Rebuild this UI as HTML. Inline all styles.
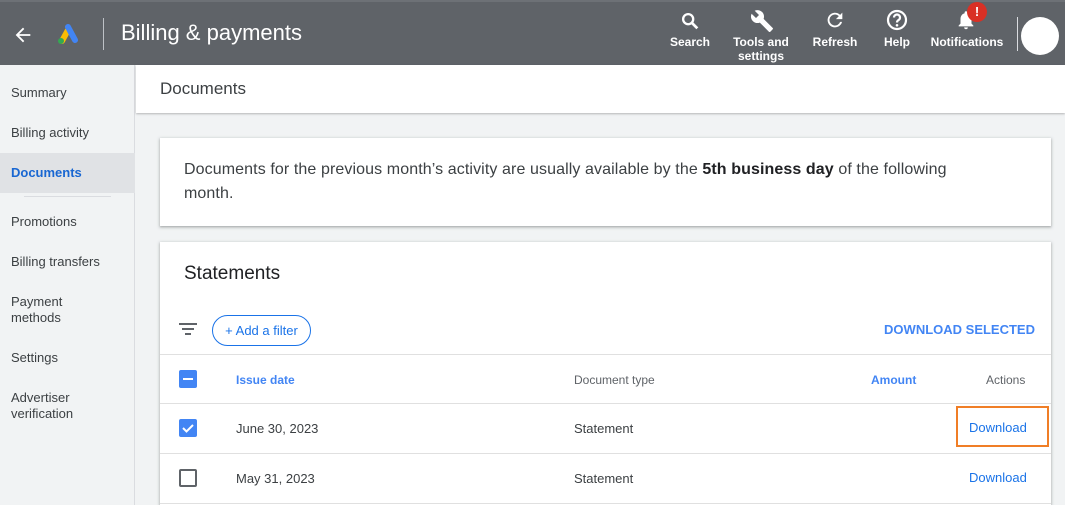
<!DOCTYPE html>
<html style="width:1065px;height:505px;overflow:hidden"><head><style>
*{box-sizing:border-box;margin:0;padding:0}
body{width:1065px;height:505px;overflow:hidden;font-family:"Liberation Sans",Arial,sans-serif;background:#f1f3f4;position:relative;color:#202124}
.hdr{position:absolute;left:0;top:0;width:1065px;height:65px;background:#5f6368;border-top:2px solid #6d7176}
.t{position:absolute;color:#fff}
.nav{position:absolute;color:#fff;font-weight:bold;font-size:12px;text-align:center;line-height:14px}
.side{position:absolute;left:0;top:65px;width:135px;height:440px;background:#f1f3f4;border-right:1px solid #dadce0}
.side div{position:absolute;left:11px;font-size:13px;color:#3c4043;line-height:16px}
.card{position:absolute;background:#fff;box-shadow:0 1px 2px rgba(60,64,67,.3),0 1px 3px 1px rgba(60,64,67,.15)}
.line{position:absolute;left:0;right:0;height:1px;background:#e0e0e0}
.cb{position:absolute;width:18px;height:18px;border-radius:2px}
.s{position:absolute;font-size:13px;color:#3c4043}
.b{position:absolute;font-size:12px;color:#1a73e8}
</style></head><body>
<div class="hdr">
<svg style="position:absolute;left:12px;top:22px" width="22" height="22" viewBox="0 0 24 24"><path d="M20 11H7.8l5.6-5.6L12 4l-8 8 8 8 1.4-1.4L7.8 13H20z" fill="#fff"/></svg>
<svg style="position:absolute;left:56px;top:21px" width="24" height="22" viewBox="0 0 24 22"><path d="M6 18 L12 7" stroke="#fbbc04" stroke-width="6" stroke-linecap="round"/><path d="M12 4 L19 17" stroke="#4285f4" stroke-width="6" stroke-linecap="round"/><circle cx="5" cy="18" r="3" fill="#34a853"/></svg>
<div style="position:absolute;left:103px;top:16px;width:1px;height:32px;background:#bdc1c6"></div>
<div class="t" style="left:121px;top:18px;font-size:22px">Billing &amp; payments</div>
<svg style="position:absolute;left:679px;top:8px" width="22" height="22" viewBox="0 0 24 24"><circle cx="10" cy="10" r="5.5" stroke="#fff" stroke-width="2.5" fill="none"/><path d="M14 14l6 6" stroke="#fff" stroke-width="3"/></svg>
<div class="nav" style="left:664px;top:33px;width:52px">Search</div>
<svg style="position:absolute;left:750px;top:7px" width="24" height="24" viewBox="0 0 24 24"><path d="M22.7 19l-9.1-9.1c.9-2.3.4-5-1.5-6.9-2-2-5-2.4-7.4-1.3L9 6 6 9 1.6 4.7C.4 7.1.9 10.1 2.9 12.1c1.9 1.9 4.6 2.4 6.9 1.5l9.1 9.1c.4.4 1 .4 1.4 0l2.3-2.3c.5-.4.5-1.1.1-1.4z" fill="#fff"/></svg>
<div class="nav" style="left:728px;top:33px;width:66px">Tools and<br>settings</div>
<svg style="position:absolute;left:824px;top:7px" width="22" height="22" viewBox="0 0 24 24"><path d="M17.6 6.4A8 8 0 1 0 19.7 14h-2.1A6 6 0 1 1 12 6c1.7 0 3.1.7 4.2 1.8L13 11h7V4z" fill="#fff"/></svg>
<div class="nav" style="left:808px;top:33px;width:54px">Refresh</div>
<svg style="position:absolute;left:885px;top:6px" width="24" height="24" viewBox="0 0 24 24"><circle cx="12" cy="12" r="9" stroke="#fff" stroke-width="2.2" fill="none"/><path d="M9 9.5a3 3 0 1 1 4.5 2.6c-1 .6-1.5 1.2-1.5 2.4" stroke="#fff" stroke-width="2.2" fill="none"/><circle cx="12" cy="17.3" r="1.3" fill="#fff"/></svg>
<div class="nav" style="left:877px;top:33px;width:40px">Help</div>
<svg style="position:absolute;left:955px;top:7px" width="22" height="22" viewBox="0 0 24 24"><path d="M12 22a2 2 0 0 0 2-2h-4a2 2 0 0 0 2 2zm6-6v-5c0-3-1.6-5.6-4.5-6.3V4a1.5 1.5 0 0 0-3 0v.7C7.6 5.4 6 8 6 11v5l-2 2v1h16v-1z" fill="#fff"/></svg>
<div style="position:absolute;left:967px;top:0px;width:20px;height:20px;border-radius:50%;background:#d93025;color:#fff;font-weight:bold;font-size:13px;text-align:center;line-height:20px">!</div>
<div class="nav" style="left:928px;top:33px;width:78px">Notifications</div>
<div style="position:absolute;left:1017px;top:15px;width:1px;height:34px;background:#dadce0"></div>
<div style="position:absolute;left:1021px;top:15px;width:38px;height:38px;border-radius:50%;background:#fff"></div>
</div>
<div class="side">
<div style="top:20px">Summary</div>
<div style="top:60px">Billing activity</div>
<div style="left:0;top:88px;width:135px;height:40px;background:#e0e2e5"></div>
<div style="top:100px;color:#1967d2;font-weight:bold">Documents</div>
<div style="top:131px;left:24px;width:87px;height:1px;background:#dadce0"></div>
<div style="top:149px">Promotions</div>
<div style="top:189px">Billing transfers</div>
<div style="top:229px">Payment<br>methods</div>
<div style="top:285px">Settings</div>
<div style="top:325px">Advertiser<br>verification</div>
</div>
<div style="position:absolute;left:136px;top:65px;width:929px;height:48px;background:#fff;box-shadow:0 1px 2px rgba(0,0,0,.25)"></div>
<div style="position:absolute;left:160px;top:79px;font-size:17px;color:#3c4043">Documents</div>
<div class="card" style="left:160px;top:138px;width:891px;height:88px">
<div style="position:absolute;left:24px;top:20px;width:780px;font-size:16px;line-height:24px;color:#3c4043;letter-spacing:.1px">Documents for the previous month’s activity are usually available by the <b style="color:#202124">5th business day</b> of the following month.</div>
</div>
<div class="card" style="left:160px;top:242px;width:891px;height:263px">
<div style="position:absolute;left:24px;top:21px;font-size:19px;color:#202124">Statements</div>
<svg style="position:absolute;left:18px;top:79px" width="20" height="16" viewBox="0 0 20 16"><path d="M1 3h18M4 8h12M7 13h6" stroke="#5f6368" stroke-width="2"/></svg>
<div style="position:absolute;left:52px;top:73px;width:99px;height:31px;border:1px solid #1a73e8;border-radius:16px;color:#1a73e8;font-size:13px;text-align:center;line-height:29px">+ Add a filter</div>
<div style="position:absolute;right:16px;top:80px;font-size:13px;font-weight:bold;color:#4285f4">DOWNLOAD SELECTED</div>
<div class="line" style="top:112px"></div>
<div class="cb" style="left:19px;top:128px;background:#4285f4"><div style="position:absolute;left:4px;top:8px;width:10px;height:2px;background:#fff"></div></div>
<div class="b" style="left:76px;top:131px;font-weight:bold;color:#4285f4">Issue date</div>
<div class="s" style="left:414px;top:131px;font-size:12px;color:#5f6368">Document type</div>
<div class="b" style="left:711px;top:131px;font-weight:bold;color:#4285f4">Amount</div>
<div class="s" style="left:826px;top:131px;font-size:12px;color:#5f6368">Actions</div>
<div class="line" style="top:161px"></div>
<div class="cb" style="left:19px;top:177px;background:#4285f4"><svg width="18" height="18" viewBox="0 0 18 18"><path d="M4 9l3.5 3.5L14 6" stroke="#fff" stroke-width="2" fill="none"/></svg></div>
<div class="s" style="left:76px;top:179px">June 30, 2023</div>
<div class="s" style="left:414px;top:179px">Statement</div>
<div style="position:absolute;left:796px;top:164px;width:93px;height:41px;border:2px solid #f07e26"></div>
<div class="s" style="left:809px;top:178px;color:#1a73e8">Download</div>
<div class="line" style="top:211px"></div>
<div class="cb" style="left:19px;top:227px;border:2px solid #5f6368"></div>
<div class="s" style="left:76px;top:229px">May 31, 2023</div>
<div class="s" style="left:414px;top:229px">Statement</div>
<div class="s" style="left:809px;top:228px;color:#1a73e8">Download</div>
<div class="line" style="top:261px"></div>
</div>
</body></html>
